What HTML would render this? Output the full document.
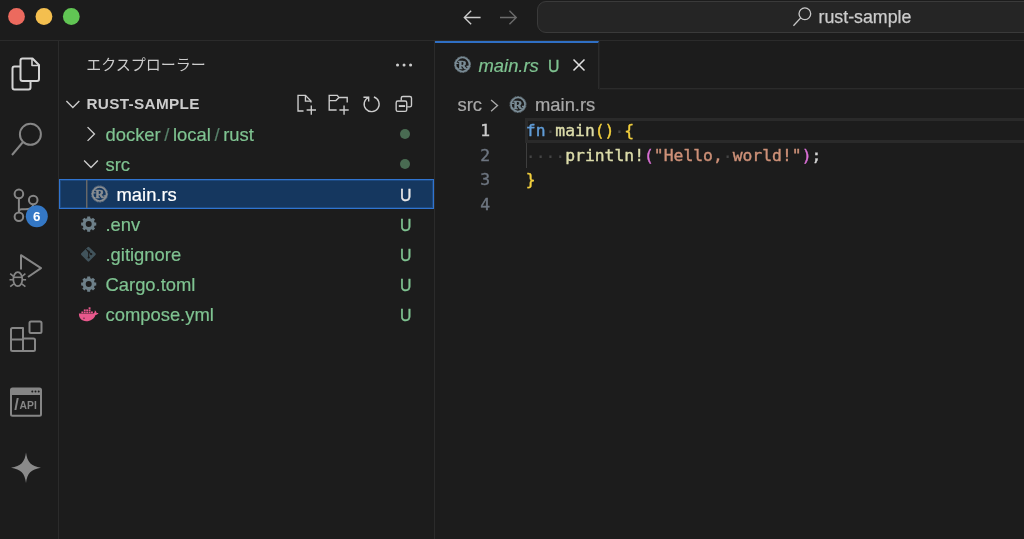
<!DOCTYPE html>
<html lang="ja">
<head>
<meta charset="utf-8">
<title>rust-sample</title>
<style>
html,body{margin:0;padding:0;}
body{width:1024px;height:539px;overflow:hidden;background:#1c1c1c;position:relative;
  font-family:"Liberation Sans","Noto Sans CJK JP",sans-serif;font-size:17.7px;color:#cccccc;
  -webkit-font-smoothing:antialiased;}
#root{position:absolute;left:0;top:0;width:1024px;height:539px;will-change:transform;}
.abs{position:absolute;}
.t{position:absolute;white-space:pre;line-height:30px;height:30px;}
.r{font-size:18.400px;margin-top:1px;margin-left:-0.500px;-webkit-text-stroke:0.200px currentColor;}
.u{font-size:15.800px;margin-top:1.500px;-webkit-text-stroke:0.350px currentColor;}
/* title bar */
#titlebar{left:0;top:0;width:1024px;height:40px;background:#1c1c1c;border-bottom:1px solid #2b2b2b;}
.tl{position:absolute;top:8px;width:17px;height:17px;border-radius:50%;}
#cc{left:537px;top:1px;width:520px;height:32px;border:1px solid #3a3a3a;border-radius:9px;background:#252525;box-sizing:border-box;}
/* activity bar */
#actbar{left:0;top:41px;width:58px;height:498px;background:#1c1c1c;border-right:1px solid #2b2b2b;}
/* sidebar */
#sidebar{left:59px;top:41px;width:375px;height:498px;background:#1c1c1c;border-right:1px solid #2b2b2b;box-shadow:1px 0 0 #212121;}
/* editor */
#editor{left:435px;top:41px;width:589px;height:498px;background:#1c1c1c;}
#tabs{left:599px;top:41px;width:425px;height:48px;background:#1c1c1c;border-bottom:1px solid #2b2b2b;box-sizing:border-box;box-shadow:0 1px 0 #212121;}
#tab{left:435px;top:41px;width:164px;height:48px;box-shadow:1px 0 0 #222222;background:#1c1c1c;border-top:2px solid #2f6fc4;border-right:1px solid #2b2b2b;box-sizing:border-box;}
.green{color:#7fc391;}
.mono{font-family:"DejaVu Sans Mono","Liberation Mono",monospace;font-size:16.36px;-webkit-text-stroke:0.400px currentColor;}
.code{position:absolute;white-space:pre;line-height:24.550px;height:24.550px;left:525.800px;}
.ln{position:absolute;white-space:pre;line-height:24.550px;height:24.550px;width:40px;text-align:right;left:450px;color:#6e7681;}
.ws{color:#444444;-webkit-text-stroke:0.150px #444444;position:relative;top:1px;}
.sep{color:#57816a;margin:0 3.600px;}
.dot{width:10px;height:10px;border-radius:50%;background:#496b52;}
</style>
</head>
<body>
<div id="root">
<!-- TITLE BAR -->
<div id="titlebar" class="abs">
  <svg class="abs" style="left:0;top:0" width="90" height="34" viewBox="0 0 90 34"><circle cx="16.500" cy="16.500" r="8.400" fill="#ec6a5e"/><circle cx="43.950" cy="16.500" r="8.400" fill="#f4bf4f"/><circle cx="71.300" cy="16.500" r="8.400" fill="#61c554"/></svg>
  <svg class="abs" style="left:461px;top:7px" width="21" height="21" viewBox="-0.533 0 16 16" fill="none" stroke="#cccccc" stroke-width="1.050"><path d="M14.400 8H2.500M7.200 2.800L2 8l5.200 5.200"/></svg>
  <svg class="abs" style="left:497px;top:7px" width="21" height="21" viewBox="-0.686 0 16 16" fill="none" stroke="#6b6b6b" stroke-width="1.050"><path d="M1.600 8H13.500M8.800 2.800L14 8l-5.200 5.200"/></svg>
  <div id="cc" class="abs"></div>
  <svg class="abs" style="left:792px;top:6px" width="21" height="21" viewBox="0 0 16 16" fill="none" stroke="#c8c8c8" stroke-width="1"><circle cx="9.800" cy="5.900" r="4.450"/><path d="M6.650 9.050L1.100 15"/></svg>
  <div class="t" style="left:818.500px;top:2px;color:#cccccc;font-size:17.800px;-webkit-text-stroke:0.250px #cccccc;">rust-sample</div>
</div>

<!-- ACTIVITY BAR -->
<div id="actbar" class="abs"></div>
<svg class="abs" style="left:0;top:0" width="58" height="539" viewBox="0 0 58 539" fill="none" stroke-linejoin="round" stroke-linecap="butt">
  <!-- explorer (active) -->
  <g stroke="#d4d4d4" stroke-width="2">
    <path d="M20.500 66.500h-6a2 2 0 0 0-2 2v19a2 2 0 0 0 2 2h14a2 2 0 0 0 2-2v-6"/>
    <path d="M22.500 58.500h10l6.500 6.500v14a2 2 0 0 1-2 2h-14.500a2 2 0 0 1-2-2v-18.500a2 2 0 0 1 2-2z"/>
    <path d="M32 59v6.500h6.500" stroke-width="1.600"/>
  </g>
  <!-- search -->
  <g stroke="#868686" stroke-width="2">
    <circle cx="30.400" cy="134.300" r="10.500"/>
    <path d="M23 142l-11 13"/>
  </g>
  <!-- source control -->
  <g stroke="#868686" stroke-width="2">
    <circle cx="18.900" cy="193.900" r="4.300"/>
    <circle cx="33.200" cy="200" r="4.300"/>
    <circle cx="18.900" cy="216.700" r="4.300"/>
    <path d="M18.900 198.200v14.200"/>
    <path d="M33.200 204.300c0 3.800-3 5-8 5h-3.500c-1.800 0-2.800 0.800-2.800 2.200"/>
  </g>
  <!-- debug -->
  <g stroke="#868686" stroke-width="2">
    <path d="M21 269.500v-14.300l20 13-13 8.800"/>
    <ellipse cx="17.800" cy="279.200" rx="4.500" ry="7" stroke-width="1.800"/>
    <path d="M13.300 277.300h9" stroke-width="1.600"/>
    <path d="M13.500 276.300l-3.300-2.600M22.100 276.300l3.300-2.600M9.500 279.800h3.600M26.100 279.800h-3.600M13.800 283.800l-3.600 2.800M21.800 283.800l3.600 2.800" stroke-width="1.600"/>
  </g>
  <!-- extensions -->
  <g stroke="#868686" stroke-width="2">
    <path d="M23 328h-10.500a1.500 1.500 0 0 0-1.500 1.500v20a1.500 1.500 0 0 0 1.500 1.500h21a1.500 1.500 0 0 0 1.500-1.500v-9.500a1.500 1.500 0 0 0-1.500-1.500h-10.500z"/>
    <path d="M23 338.500v12.500M11 339.500h12"/>
    <rect x="29.500" y="321.500" width="12" height="11.500" rx="1.500"/>
  </g>
  <!-- api -->
  <g stroke="#868686" stroke-width="2">
    <rect x="11" y="388.500" width="30" height="27.300" rx="1.500"/>
    
  </g>
  <g fill="#868686" stroke="none">
    <rect x="11" y="388.500" width="30" height="6.500"/>
  </g>
  <g fill="#1c1c1c" stroke="none">
    <circle cx="32.300" cy="391.500" r="1"/><circle cx="35.500" cy="391.500" r="1"/><circle cx="38.700" cy="391.500" r="1"/>
  </g>
  <text x="14.300" y="409.800" font-family="Liberation Sans, sans-serif" font-weight="bold" font-size="16.500" fill="#868686" stroke="none">/</text>
  <text x="19.600" y="408.700" font-family="Liberation Sans, sans-serif" font-weight="bold" font-size="10.400" fill="#868686" stroke="none" textLength="17.200" lengthAdjust="spacingAndGlyphs">API</text>
  <!-- sparkle -->
  <path d="M26 452.500c1.200 9.500 5 13.800 15 15.200c-10 1.400-13.800 5.700-15 15.200c-1.200-9.500-5-13.800-15-15.200c10-1.400 13.800-5.700 15-15.200z" fill="#8a8a8a" stroke="none"/>
  <!-- badge -->
  <circle cx="36.800" cy="216.200" r="11" fill="#3478c6" stroke="none"/>
  <text x="36.800" y="220.600" text-anchor="middle" font-family="Liberation Sans, sans-serif" font-weight="bold" font-size="13.400" fill="#ffffff" stroke="none">6</text>
</svg>

<!-- SIDEBAR -->
<div id="sidebar" class="abs"></div>
<div class="t" style="left:86.300px;top:49.600px;font-size:15px;color:#cccccc;">エクスプローラー</div>
<svg class="abs" style="left:393px;top:54px" width="22" height="22" viewBox="0 0 16 16" fill="#cccccc"><circle cx="3.300" cy="8" r="1.100"/><circle cx="8.050" cy="8" r="1.100"/><circle cx="12.800" cy="8" r="1.100"/></svg>
<!-- section header -->
<svg class="abs" style="left:62px;top:93px" width="22" height="22" viewBox="0 0 16 16" fill="none" stroke="#cccccc" stroke-width="1"><path d="M3.200 5.800l4.700 4.700 4.700-4.700"/></svg>
<div class="t" style="left:86.500px;top:89px;font-size:15.300px;font-weight:bold;color:#cccccc;letter-spacing:0.320px;">RUST-SAMPLE</div>
<!-- header actions -->
<svg class="abs" style="left:295px;top:93px" width="22" height="22" viewBox="0 0 16 16" fill="none" stroke="#cccccc" stroke-width="1"><path d="M6.200 13.100H2.200V1.700H7.600L11.600 5.900V6.900"/><path d="M7.600 1.700V5.900H11.600"/><path d="M11.850 9v6.800M8.450 12.400h6.800"/></svg>
<svg class="abs" style="left:327px;top:93px" width="22" height="22" viewBox="0 0 16 16" fill="none" stroke="#cccccc" stroke-width="1"><path d="M7 12.400H1.600V1.700H7.500L8.700 3.300H14.700V6.900"/><path d="M1.600 5.500H6.500L8.700 3.300"/><path d="M12.400 9v6.800M9 12.400h6.800"/></svg>
<svg class="abs" style="left:360px;top:93px" width="22" height="22" viewBox="0 0 16 16" fill="none" stroke="#cccccc" stroke-width="1"><path d="M10.100 2.900A5.450 5.450 0 1 1 6.300 3.100"/><path d="M2.500 3.100H6.300V6.100"/></svg>
<svg class="abs" style="left:393px;top:93px" width="22" height="22" viewBox="0 0 16 16" fill="none" stroke="#cccccc" stroke-width="1"><rect x="2.300" y="5.800" width="7.700" height="7.600" rx="1.200"/><path d="M6 5.500V3.700a1.200 1.200 0 0 1 1.200-1.200h5.050a1.200 1.200 0 0 1 1.200 1.200v5.200a1.200 1.200 0 0 1-1.200 1.200H10.300"/><path d="M4.200 9.500h4.600" stroke-width="1.400"/></svg>
<!-- tree -->
<div class="abs" style="left:59px;top:179px;width:375px;height:30px;box-sizing:border-box;background:#15375f;border:1px solid #3074cf;box-shadow:inset 0 0 0 1px rgba(48,116,207,0.300);"></div>
<div class="abs" style="left:86px;top:180px;width:1px;height:28px;background:#686868;box-shadow:1px 0 0 rgba(104,104,104,0.450);"></div>

<svg class="abs" style="left:80px;top:123px" width="22" height="22" viewBox="0 0 16 16" fill="none" stroke="#cccccc" stroke-width="1"><path d="M5.500 3l5 5-5 5"/></svg>
<div class="t r green" style="left:106px;top:119px;">docker<span class="sep">/</span>local<span class="sep">/</span>rust</div>
<div class="abs dot" style="left:400px;top:129px;"></div>

<svg class="abs" style="left:80px;top:153px" width="22" height="22" viewBox="0 0 16 16" fill="none" stroke="#cccccc" stroke-width="1"><path d="M3 5.500l5 5 5-5"/></svg>
<div class="t r green" style="left:106px;top:149px;">src</div>
<div class="abs dot" style="left:400px;top:159px;"></div>

<div class="t r" style="left:117px;top:179px;color:#ffffff;">main.rs</div>
<div class="t u" style="left:400px;top:179px;color:#e8e8e8;">U</div>

<svg class="abs" style="left:89px;top:184px" width="20" height="20" viewBox="-10.6 -10 20 20"><circle cx="0" cy="0" r="7" fill="none" stroke="#8b8f93" stroke-width="1.700"/><circle cx="0" cy="0" r="8" fill="none" stroke="#8b8f93" stroke-width="1" stroke-dasharray="0.900 0.671"/><path d="M-6.500 -1.200h2.500M4 2h2.500M-6.500 3.700h2M4.800 3.700h1" stroke="#8b8f93" stroke-width="1.300" fill="none"/><text x="0.100" y="4.300" text-anchor="middle" font-family="Liberation Serif, serif" font-weight="bold" font-size="12.500" fill="#8b8f93" stroke="#8b8f93" stroke-width="0.500">R</text></svg>
<svg class="abs" style="left:78px;top:214px" width="20" height="20" viewBox="-10.7 -10.1 20 20"><path d="M-1.56 -5.90L-1.50 -7.55L1.50 -7.55L1.56 -5.90L3.06 -5.27L4.28 -6.40L6.40 -4.28L5.27 -3.06L5.90 -1.56L7.55 -1.50L7.55 1.50L5.90 1.56L5.27 3.06L6.40 4.28L4.28 6.40L3.06 5.27L1.56 5.90L1.50 7.55L-1.50 7.55L-1.56 5.90L-3.06 5.27L-4.28 6.40L-6.40 4.28L-5.27 3.06L-5.90 1.56L-7.55 1.50L-7.55 -1.50L-5.90 -1.56L-5.27 -3.06L-6.40 -4.28L-4.28 -6.40L-3.06 -5.27ZM3.00 0.00A3.0 3.0 0 1 0 -3.00 0.00A3.0 3.0 0 1 0 3.00 0.00Z" fill="#6d7f88" fill-rule="evenodd"/></svg>
<svg class="abs" style="left:78px;top:274px" width="20" height="20" viewBox="-10.7 -10.1 20 20"><path d="M-1.56 -5.90L-1.50 -7.55L1.50 -7.55L1.56 -5.90L3.06 -5.27L4.28 -6.40L6.40 -4.28L5.27 -3.06L5.90 -1.56L7.55 -1.50L7.55 1.50L5.90 1.56L5.27 3.06L6.40 4.28L4.28 6.40L3.06 5.27L1.56 5.90L1.50 7.55L-1.50 7.55L-1.56 5.90L-3.06 5.27L-4.28 6.40L-6.40 4.28L-5.27 3.06L-5.90 1.56L-7.55 1.50L-7.55 -1.50L-5.90 -1.56L-5.27 -3.06L-6.40 -4.28L-4.28 -6.40L-3.06 -5.27ZM3.00 0.00A3.0 3.0 0 1 0 -3.00 0.00A3.0 3.0 0 1 0 3.00 0.00Z" fill="#6d7f88" fill-rule="evenodd"/></svg>
<svg class="abs" style="left:78px;top:244px" width="20" height="20" viewBox="-10.4 -10.2 20 20"><rect x="-5.600" y="-5.600" width="11.200" height="11.200" rx="1.200" transform="rotate(45)" fill="#41535b"/><g stroke="#1c1c1c" stroke-width="1.100" fill="none"><path d="M0.300 -2.500v6M-2.300 -5l5 5"/></g><circle cx="0.300" cy="-2.600" r="1.100" fill="#1c1c1c"/><circle cx="0.300" cy="3.300" r="1.100" fill="#1c1c1c"/><circle cx="2.800" cy="0" r="1.100" fill="#1c1c1c"/></svg>
<svg class="abs" style="left:76px;top:302px" width="26" height="24" viewBox="76 302 26 24"><g fill="#e8588c"><path d="M78.900 313.600h14.200c1.200-0.300 1.800-1.700 1.700-3.400c1.300 0.800 1.800 1.900 1.700 3c0.800-0.400 1.500-0.300 2-0.100c-0.500 1.300-1.700 1.900-3 1.800c-1.500 3.900-4.800 6.300-9.200 6.300c-4.700 0-7.400-2.800-7.400-7.600z"/><rect x="81.400" y="311.500" width="1.900" height="1.700"/><rect x="83.800" y="311.500" width="1.900" height="1.700"/><rect x="86.200" y="311.500" width="1.900" height="1.700"/><rect x="88.600" y="311.500" width="1.900" height="1.700"/><rect x="91" y="311.500" width="1.900" height="1.700"/><rect x="83.800" y="309.400" width="1.900" height="1.700"/><rect x="86.200" y="309.400" width="1.900" height="1.700"/><rect x="88.600" y="309.400" width="1.900" height="1.700"/><rect x="88.600" y="307.300" width="1.900" height="1.700"/></g><circle cx="84" cy="318.200" r="0.600" fill="#1c1c1c"/></svg>
<div class="t r green" style="left:106px;top:209px;">.env</div>
<div class="t u green" style="left:400px;top:209px;">U</div>
<div class="t r green" style="left:106px;top:239px;">.gitignore</div>
<div class="t u green" style="left:400px;top:239px;">U</div>
<div class="t r green" style="left:106px;top:269px;">Cargo.toml</div>
<div class="t u green" style="left:400px;top:269px;">U</div>
<div class="t r green" style="left:106px;top:299px;">compose.yml</div>
<div class="t u green" style="left:400px;top:299px;">U</div>

<!-- EDITOR -->
<div id="editor" class="abs"></div>
<div id="tabs" class="abs"></div>
<div id="tab" class="abs"></div>
<svg class="abs" style="left:452px;top:54px" width="20" height="20" viewBox="-10.5 -10.5 20 20"><circle cx="0" cy="0" r="7" fill="none" stroke="#7b8d97" stroke-width="1.700"/><circle cx="0" cy="0" r="8" fill="none" stroke="#7b8d97" stroke-width="1" stroke-dasharray="0.900 0.671"/><path d="M-6.500 -1.200h2.500M4 2h2.500M-6.500 3.700h2M4.800 3.700h1" stroke="#7b8d97" stroke-width="1.300" fill="none"/><text x="0.100" y="4.300" text-anchor="middle" font-family="Liberation Serif, serif" font-weight="bold" font-size="12.500" fill="#7b8d97" stroke="#7b8d97" stroke-width="0.500">R</text></svg>
<div class="t r green" style="left:479px;top:50px;font-style:italic;">main.rs</div>
<div class="t u green" style="left:548px;top:50px;">U</div>
<svg class="abs" style="left:568px;top:54px" width="22" height="22" viewBox="0 0 16 16" fill="none" stroke="#e0e0e0" stroke-width="1.100"><path d="M4 4l8 8M12 4l-8 8"/></svg>
<!-- breadcrumbs -->
<div class="t r" style="left:458px;top:89px;color:#a9a9a9;">src</div>
<svg class="abs" style="left:484px;top:96px" width="19" height="19" viewBox="-0.674 -0.084 16 16" fill="none" stroke="#a9a9a9" stroke-width="1.150"><path d="M5.300 3.300l5.400 4.700-5.400 4.700"/></svg>
<svg class="abs" style="left:508px;top:94px" width="20" height="20" viewBox="-10 -10.5 20 20"><circle cx="0" cy="0" r="7" fill="none" stroke="#7b8d97" stroke-width="1.700"/><circle cx="0" cy="0" r="8" fill="none" stroke="#7b8d97" stroke-width="1" stroke-dasharray="0.900 0.671"/><path d="M-6.500 -1.200h2.500M4 2h2.500M-6.500 3.700h2M4.800 3.700h1" stroke="#7b8d97" stroke-width="1.300" fill="none"/><text x="0.100" y="4.300" text-anchor="middle" font-family="Liberation Serif, serif" font-weight="bold" font-size="12.500" fill="#7b8d97" stroke="#7b8d97" stroke-width="0.500">R</text></svg>
<div class="t r" style="left:535.500px;top:89px;color:#a9a9a9;">main.rs</div>
<!-- code -->
<div class="abs" style="left:525px;top:118px;width:499px;height:25px;box-sizing:border-box;border:3px solid #2a2a2a;border-right:none;"></div>
<div class="abs" style="left:526px;top:143px;width:1px;height:24.500px;background:#3e3e3e;"></div>
<div class="ln mono" style="top:119.10px;color:#cccccc;">1</div>
<div class="ln mono" style="top:143.65px;">2</div>
<div class="ln mono" style="top:168.20px;">3</div>
<div class="ln mono" style="top:192.75px;">4</div>
<div class="code mono" style="top:119.10px;"><span style="color:#609dd8">fn</span><span class="ws">·</span><span style="color:#dcdcaa">main</span><span style="color:#f3d03e">()</span><span class="ws">·</span><span style="color:#f3d03e">{</span></div>
<div class="code mono" style="top:143.65px;"><span class="ws">····</span><span style="color:#dcdcaa">println!</span><span style="color:#da70d6">(</span><span style="color:#ce9178">"Hello,</span><span class="ws">·</span><span style="color:#ce9178">world!"</span><span style="color:#da70d6">)</span><span style="color:#d4d4d4">;</span></div>
<div class="code mono" style="top:168.20px;"><span style="color:#f3d03e">}</span></div>

</div>
</body>
</html>
